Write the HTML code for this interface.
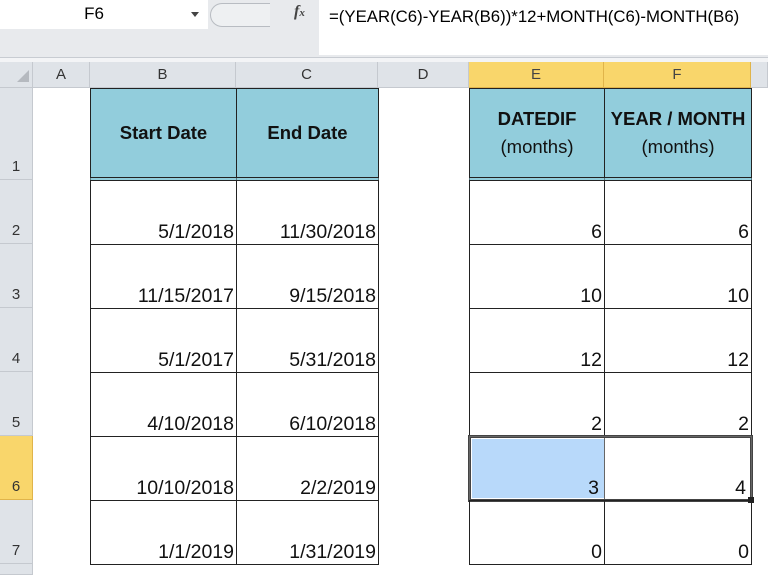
<!DOCTYPE html><html><head><style>
body{margin:0;width:768px;height:575px;overflow:hidden;background:#fff;font-family:"Liberation Sans",sans-serif;position:relative}
div{position:absolute;box-sizing:border-box}
.ch{top:62px;height:26px;background:#dfe3e8;border-right:1px solid #c5c9cf;border-bottom:1px solid #c5c9cf;text-align:center;font-size:15px;line-height:26px;color:#333}
.rh{left:0;width:33px;background:#dfe3e8;border-bottom:1px solid #c5c9cf;border-right:1px solid #c5c9cf;font-size:15px;color:#333;text-align:center}
.c{border:1.5px solid #222;font-size:19.5px;color:#111;text-align:right;padding-right:2px;display:flex;align-items:flex-end;justify-content:flex-end;padding-bottom:0px}
.h{background:#92cddc;border:1.5px solid #222;border-bottom:4px double #222;text-align:center;font-size:18.5px;color:#111;display:flex;flex-direction:column;align-items:center;justify-content:center}
</style></head><body>
<div style="left:0;top:0;width:768px;height:57px;background:#e8eaed"></div>
<div style="left:0;top:0;width:208px;height:29px;background:#fff;font-size:17px;text-align:center;line-height:28px;padding-right:20px">F6</div>
<div style="left:191px;top:12px;width:0;height:0;border-left:4px solid transparent;border-right:4px solid transparent;border-top:5px solid #444"></div>
<div style="left:210px;top:3px;width:60px;height:24px;border:1px solid #b8bcc2;border-radius:12px 0 0 12px;border-right:none;background:#eef0f2"></div>
<div style="left:294px;top:3px;font-family:'Liberation Serif',serif;font-style:italic;font-size:16px;font-weight:bold;color:#444">f<span style="font-size:11px">x</span></div>
<div style="left:319px;top:0;width:449px;height:55px;background:#fff;font-size:16.8px;padding:7px 0 0 10px;white-space:nowrap">=(YEAR(C6)-YEAR(B6))*12+MONTH(C6)-MONTH(B6)</div>
<div style="left:0;top:57px;width:768px;height:5px;background:#f3f4f6;border-top:1px solid #c8ccd2"></div>
<div class="ch" style="left:0;width:33px"></div>
<div style="left:17px;top:70px;width:0;height:0;border-left:12px solid transparent;border-bottom:12px solid #b5b9bf"></div>
<div class="ch" style="left:33px;width:57px">A</div>
<div class="ch" style="left:90px;width:146px">B</div>
<div class="ch" style="left:236px;width:142px">C</div>
<div class="ch" style="left:378px;width:91px">D</div>
<div class="ch" style="left:469px;width:135px;background:#f9d66b;border-color:#e0b44a;color:#444">E</div>
<div class="ch" style="left:604px;width:147px;background:#f9d66b;border-color:#e0b44a;color:#444">F</div>
<div class="ch" style="left:751px;width:17px"></div>
<div class="rh" style="top:88px;height:92px;padding-top:70px">1</div>
<div class="rh" style="top:180px;height:64px;padding-top:42px">2</div>
<div class="rh" style="top:244px;height:64px;padding-top:42px">3</div>
<div class="rh" style="top:308px;height:64px;padding-top:42px">4</div>
<div class="rh" style="top:372px;height:64px;padding-top:42px">5</div>
<div class="rh" style="top:436px;height:64px;padding-top:42px;background:#f9d66b;border-color:#e0b44a">6</div>
<div class="rh" style="top:500px;height:64px;padding-top:42px">7</div>
<div class="rh" style="top:564px;height:11px"></div>
<div class="h" style="left:90px;top:88px;width:147px;height:93px"><b>Start Date</b></div>
<div class="h" style="left:236px;top:88px;width:143px;height:93px"><b>End Date</b></div>
<div class="h" style="left:469px;top:88px;width:136px;height:93px;line-height:28px"><b>DATEDIF</b><span>(months)</span></div>
<div class="h" style="left:604px;top:88px;width:148px;height:93px;line-height:28px"><b style="white-space:nowrap">YEAR / MONTH</b><span>(months)</span></div>
<div class="c" style="left:90px;top:180px;width:147px;height:65px">5/1/2018</div>
<div class="c" style="left:236px;top:180px;width:143px;height:65px">11/30/2018</div>
<div class="c" style="left:469px;top:180px;width:136px;height:65px">6</div>
<div class="c" style="left:604px;top:180px;width:148px;height:65px">6</div>
<div class="c" style="left:90px;top:244px;width:147px;height:65px">11/15/2017</div>
<div class="c" style="left:236px;top:244px;width:143px;height:65px">9/15/2018</div>
<div class="c" style="left:469px;top:244px;width:136px;height:65px">10</div>
<div class="c" style="left:604px;top:244px;width:148px;height:65px">10</div>
<div class="c" style="left:90px;top:308px;width:147px;height:65px">5/1/2017</div>
<div class="c" style="left:236px;top:308px;width:143px;height:65px">5/31/2018</div>
<div class="c" style="left:469px;top:308px;width:136px;height:65px">12</div>
<div class="c" style="left:604px;top:308px;width:148px;height:65px">12</div>
<div class="c" style="left:90px;top:372px;width:147px;height:65px">4/10/2018</div>
<div class="c" style="left:236px;top:372px;width:143px;height:65px">6/10/2018</div>
<div class="c" style="left:469px;top:372px;width:136px;height:65px">2</div>
<div class="c" style="left:604px;top:372px;width:148px;height:65px">2</div>
<div class="c" style="left:90px;top:436px;width:147px;height:65px">10/10/2018</div>
<div class="c" style="left:236px;top:436px;width:143px;height:65px">2/2/2019</div>
<div style="left:472px;top:439px;width:132px;height:59px;background:#b8d9fa"></div>
<div class="c" style="left:469px;top:436px;width:136px;height:65px;border-color:#666;padding-right:5px">3</div>
<div class="c" style="left:604px;top:436px;width:148px;height:65px;border-color:#666;padding-right:5px">4</div>
<div style="left:468px;top:435px;width:285px;height:67px;border:3px double #444"></div>
<div style="left:748px;top:497px;width:6px;height:6px;background:#222"></div>
<div class="c" style="left:90px;top:500px;width:147px;height:65px">1/1/2019</div>
<div class="c" style="left:236px;top:500px;width:143px;height:65px">1/31/2019</div>
<div class="c" style="left:469px;top:500px;width:136px;height:65px">0</div>
<div class="c" style="left:604px;top:500px;width:148px;height:65px">0</div>
</body></html>
